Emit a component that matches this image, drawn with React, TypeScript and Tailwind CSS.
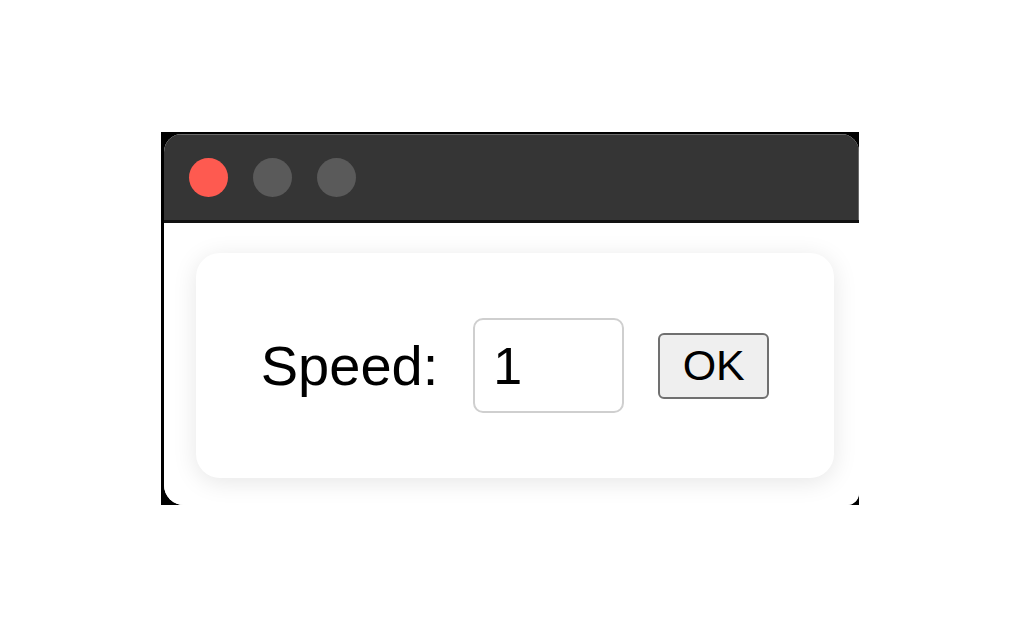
import React from "react";

export default function App() {
  return (
    <div
      className="w-[1020px] h-[638px] bg-white pt-[132px] pl-[161px]"
      style={{ fontFamily: '"Liberation Sans", Arial, sans-serif' }}
    >
      <div className="w-[698px] h-[373px] bg-black pl-[3px] pt-[2px]">
        <div className="w-[695px] h-[371px] flex flex-col overflow-hidden bg-white rounded-tl-[18px] rounded-tr-[18px] rounded-bl-[20px] rounded-br-[12px]">
          <div className="h-[86px] shrink-0 bg-[#353535] border-t border-r border-[#6a6a6a] flex items-center pl-[25px] gap-[25px]">
            <div className="w-[39px] h-[39px] rounded-full bg-[#fe5a50]" />
            <div className="w-[39px] h-[39px] rounded-full bg-[#5a5a5a]" />
            <div className="w-[39px] h-[39px] rounded-full bg-[#5a5a5a]" />
          </div>
          <div className="h-[3px] shrink-0 bg-[#111]" />
          <div className="flex-1 bg-white pt-[30px] pl-[32px]">
            <div className="w-[638px] h-[225px] rounded-[24px] bg-white shadow-[0_4px_24px_rgba(0,0,0,0.1)] flex items-center justify-center">
              <span className="text-[56px] leading-none text-black">Speed:</span>
              <div className="ml-[35px] w-[151px] h-[95px] border-2 border-[#cfcfcf] rounded-[10px] flex items-center pl-[18px]">
                <span className="text-[52px] leading-none text-black">1</span>
              </div>
              <button className="ml-[34px] w-[111px] h-[66px] border-2 border-[#707070] rounded-[6px] bg-[#efefef] flex items-center justify-center text-[43px] leading-none text-black">
                OK
              </button>
            </div>
          </div>
        </div>
      </div>
    </div>
  );
}
